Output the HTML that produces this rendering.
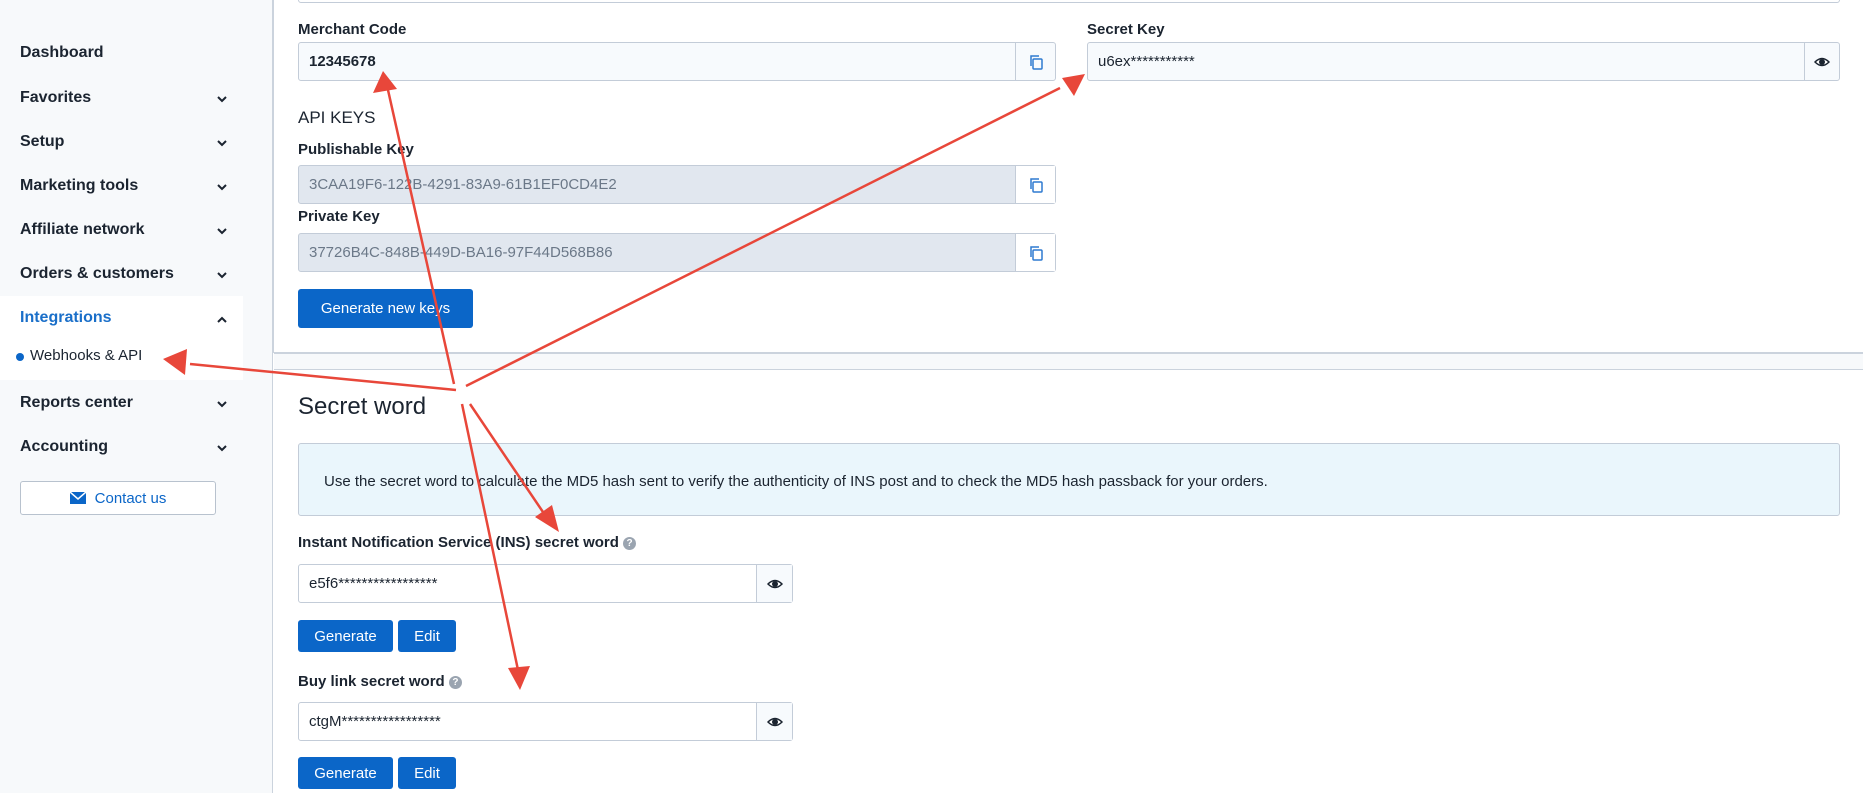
<!DOCTYPE html>
<html><head><meta charset="utf-8"><style>
*{box-sizing:border-box;margin:0;padding:0}
body{width:1863px;height:793px;overflow:hidden;background:#fff;font-family:"Liberation Sans",sans-serif;color:#1b2430;position:relative}
.abs{position:absolute}
#side{left:0;top:0;width:273px;height:793px;background:#f7f9fb;border-right:1px solid #cbd3dd}
.nav{position:absolute;left:20px;font-weight:bold;font-size:16px;color:#1b2430}
.lbl{position:absolute;font-weight:bold;font-size:15px;color:#1b2430}
.inp{position:absolute;border:1px solid #c3ccd8;border-radius:3px;background:#f7fafd;font-size:15px;padding-left:10px;display:flex;align-items:center}
.btnside{position:absolute;top:0;right:0;bottom:0;width:40px;border-left:1px solid #c3ccd8;display:flex;align-items:center;justify-content:center}
.btn{position:absolute;background:#0b66c8;color:#fff;border-radius:3px;font-size:15px;display:flex;align-items:center;justify-content:center}
</style></head><body>
<div id="side" class="abs"></div>
<div class="abs" style="left:0;top:296px;width:243px;height:84px;background:#fff"></div>
<div class="nav" style="top:44px">Dashboard</div>
<div class="nav" style="top:89px">Favorites</div>
<div class="nav" style="top:133px">Setup</div>
<div class="nav" style="top:177px">Marketing tools</div>
<div class="nav" style="top:221px">Affiliate network</div>
<div class="nav" style="top:265px">Orders &amp; customers</div>
<div class="nav" style="top:309px;color:#1a6fc9">Integrations</div>
<div class="abs" style="left:16px;top:353px;width:8px;height:8px;border-radius:50%;background:#0b66c8"></div>
<div class="abs" style="left:30px;top:347px;font-size:15px">Webhooks &amp; API</div>
<div class="nav" style="top:394px">Reports center</div>
<div class="nav" style="top:438px">Accounting</div>
<svg class="abs" style="left:0;top:0" width="273" height="793" fill="none" stroke="#1b2430" stroke-width="2">
<path d="M218 97l4 4 4-4M218 141l4 4 4-4M218 185l4 4 4-4M218 229l4 4 4-4M218 273l4 4 4-4M218 402l4 4 4-4M218 446l4 4 4-4M218 322l4-4 4 4"/>
</svg>
<div class="abs" style="left:20px;top:481px;width:196px;height:34px;border:1px solid #b8c2ce;border-radius:3px;background:#fff;color:#0b66c8;font-size:15px;display:flex;align-items:center;justify-content:center;gap:9px">
<svg width="16" height="12"><rect width="16" height="12" fill="#0b66c8"/><path d="M0 0l8 7 8-7" stroke="#fff" stroke-width="1.5" fill="none"/></svg>Contact us</div>

<div class="abs" style="left:273px;top:-5px;width:1600px;height:358px;border:1px solid #cbd3dd;border-top:none"></div>
<div class="abs" style="left:298px;top:-10px;width:1542px;height:13px;border:1px solid #c3ccd8;border-radius:3px"></div>
<div class="abs" style="left:274px;top:353px;width:1589px;height:17px;background:#f7f9fb;border-top:1px solid #cbd3dd;border-bottom:1px solid #cbd3dd"></div>

<div class="lbl" style="left:298px;top:21px">Merchant Code</div>
<div class="inp" style="left:298px;top:42px;width:758px;height:39px;font-weight:bold">12345678<div class="btnside"><svg width="16" height="16" fill="none" stroke="#2f7ad0" stroke-width="1.5"><rect x="5" y="5" width="9" height="10" rx="1"/><path d="M3 12V2h8"/></svg></div></div>
<div class="lbl" style="left:1087px;top:21px">Secret Key</div>
<div class="inp" style="left:1087px;top:42px;width:753px;height:39px">u6ex***********<div class="btnside" style="width:35px"><svg width="16" height="10"><path d="M1 5Q8-2 15 5Q8 12 1 5Z" fill="#fff" stroke="#1b2430" stroke-width="1.5"/><circle cx="8" cy="5" r="3" fill="#1b2430"/></svg></div></div>

<div class="abs" style="left:298px;top:108px;font-size:17px">API KEYS</div>
<div class="lbl" style="left:298px;top:141px">Publishable Key</div>
<div class="inp" style="left:298px;top:165px;width:758px;height:39px;background:#e1e7ef;color:#6b7888">3CAA19F6-122B-4291-83A9-61B1EF0CD4E2<div class="btnside" style="background:#fff"><svg width="16" height="16" fill="none" stroke="#2f7ad0" stroke-width="1.5"><rect x="5" y="5" width="9" height="10" rx="1"/><path d="M3 12V2h8"/></svg></div></div>
<div class="lbl" style="left:298px;top:208px">Private Key</div>
<div class="inp" style="left:298px;top:233px;width:758px;height:39px;background:#e1e7ef;color:#6b7888">37726B4C-848B-449D-BA16-97F44D568B86<div class="btnside" style="background:#fff"><svg width="16" height="16" fill="none" stroke="#2f7ad0" stroke-width="1.5"><rect x="5" y="5" width="9" height="10" rx="1"/><path d="M3 12V2h8"/></svg></div></div>
<div class="btn" style="left:298px;top:289px;width:175px;height:39px">Generate new keys</div>

<div class="abs" style="left:298px;top:393px;font-size:24px">Secret word</div>
<div class="abs" style="left:298px;top:443px;width:1542px;height:73px;background:#eaf6fc;border:1px solid #c3ccd8;border-radius:3px;font-size:15px;padding:29px 0 0 25px">Use the secret word to calculate the MD5 hash sent to verify the authenticity of INS post and to check the MD5 hash passback for your orders.</div>

<div class="lbl" style="left:298px;top:534px">Instant Notification Service (INS) secret word <span style="display:inline-block;width:13px;height:13px;border-radius:50%;background:#9aa4b0;color:#fff;font-size:10px;text-align:center;line-height:13px;vertical-align:middle">?</span></div>
<div class="inp" style="left:298px;top:564px;width:495px;height:39px;background:#fff">e5f6*****************<div class="btnside" style="width:36px;background:#f7fafd"><svg width="16" height="10"><path d="M1 5Q8-2 15 5Q8 12 1 5Z" fill="#fff" stroke="#1b2430" stroke-width="1.5"/><circle cx="8" cy="5" r="3" fill="#1b2430"/></svg></div></div>
<div class="btn" style="left:298px;top:620px;width:95px;height:32px">Generate</div>
<div class="btn" style="left:398px;top:620px;width:58px;height:32px">Edit</div>

<div class="lbl" style="left:298px;top:673px">Buy link secret word <span style="display:inline-block;width:13px;height:13px;border-radius:50%;background:#9aa4b0;color:#fff;font-size:10px;text-align:center;line-height:13px;vertical-align:middle">?</span></div>
<div class="inp" style="left:298px;top:702px;width:495px;height:39px;background:#fff">ctgM*****************<div class="btnside" style="width:36px;background:#f7fafd"><svg width="16" height="10"><path d="M1 5Q8-2 15 5Q8 12 1 5Z" fill="#fff" stroke="#1b2430" stroke-width="1.5"/><circle cx="8" cy="5" r="3" fill="#1b2430"/></svg></div></div>
<div class="btn" style="left:298px;top:757px;width:95px;height:32px">Generate</div>
<div class="btn" style="left:398px;top:757px;width:58px;height:32px">Edit</div>

<svg class="abs" style="left:0;top:0" width="1863" height="793">
<g stroke="#e8473a" stroke-width="2.5" fill="none">
<path d="M454 384L388 90M466 386L1060 88M456 390L190 364M470 404L545 515M462 404L518 670"/>
</g>
<g fill="#e8473a">
<polygon points="383,71 373,93 397,89"/>
<polygon points="1085,74 1062,78 1074,96"/>
<polygon points="163,359 187,349 185,375"/>
<polygon points="559,532 535,517 552,505"/>
<polygon points="520,690 508,668 530,666"/>
</g></svg>
</body></html>
